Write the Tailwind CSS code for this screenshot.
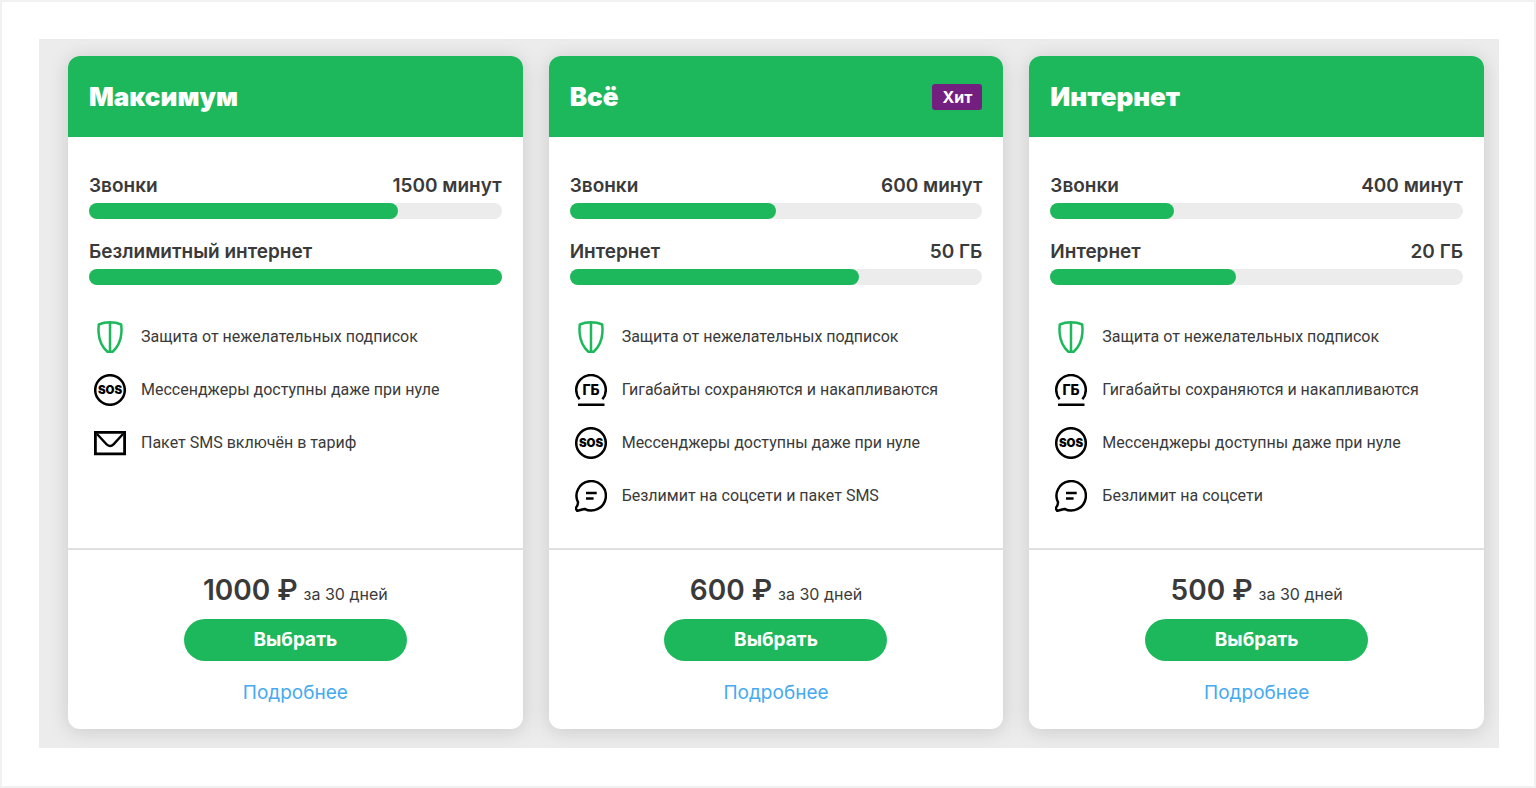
<!DOCTYPE html>
<html lang="ru">
<head>
  <meta charset="UTF-8">
  <meta name="viewport" content="width=device-width, initial-scale=1.0">
  <title>Тарифы</title>
  <script src="https://cdn.jsdelivr.net/npm/@tailwindcss/browser@4"></script>
</head>
<body class="min-h-screen border-2 border-[#f1f1f1] bg-white pt-[37px] pr-[35px] pb-[38px] pl-[37px] font-['Inter','Liberation_Sans',sans-serif] text-[#3a3a3a]">

  <!-- Icons -->
  <svg class="hidden">
    <symbol id="icon-shield" viewBox="0 0 32 32">
      <path d="M16 1.300c4.500 0 8 .8 11.200 2.200.3 2.600.4 5.300.2 8.300-.6 8-3.600 14.300-8.800 18.900h-5.200C8.200 26.100 5.200 19.800 4.600 11.800c-.2-3-.1-5.700.2-8.300C8 2.100 11.500 1.300 16 1.300zM16 2v28" fill="none" stroke="#1eb85c" stroke-width="2.500" stroke-linejoin="round"/>
    </symbol>
    <symbol id="icon-sos" viewBox="0 0 32 32">
      <circle cx="16" cy="16" r="14.800" fill="none" stroke="#000" stroke-width="2.500"/>
      <text x="16" y="20.200" text-anchor="middle" font-family="Inter, sans-serif" font-size="11.500" font-weight="900">SOS</text>
    </symbol>
    <symbol id="icon-gb" viewBox="0 0 32 32">
      <path d="M4.600 25.300a14.800 14.800 0 1 1 22.800 0M3 30.800h26.500" fill="none" stroke="#000" stroke-width="2.500"/>
      <text x="16" y="20.800" text-anchor="middle" font-family="Inter, sans-serif" font-size="14" font-weight="800">ГБ</text>
    </symbol>
    <symbol id="icon-mail" viewBox="0 0 32 32">
      <path d="M1.400 5.400h29.200v21.400H1.400z" fill="none" stroke="#000" stroke-width="2.800"/>
      <path d="M3 7l9.500 10.300c2.200 2.300 4.800 2.300 7 0L29 7" fill="none" stroke="#000" stroke-width="2.400"/>
    </symbol>
    <symbol id="icon-chat" viewBox="0 0 32 32">
      <path d="M3 22.300A14.700 14.700 0 1 1 9.500 28.900C7 29.400 5 30 2.200 30.900L0.500 28.200C2.300 26.300 3.200 24.500 3 22.300z" fill="none" stroke="#000" stroke-width="2.500" stroke-linejoin="round"/>
      <path d="M11 12.900h10.700M11 18.400h7.600" fill="none" stroke="#000" stroke-width="2.500"/>
    </symbol>
  </svg>

  <main class="grid grid-cols-3 gap-[26px] bg-[#ececec] pt-[17px] pr-[15px] pb-[19px] pl-[29px]">

    <!-- Максимум -->
    <section class="flex flex-col overflow-hidden rounded-xl bg-white shadow-[0_2px_20px_rgba(0,0,0,0.15)]">
      <div class="flex h-[81px] items-center justify-between bg-[#1eb85c] px-[21px] text-white">
        <h2 class="text-[26px] font-black">Максимум</h2>
      </div>
      <div class="flex-1 px-[21px] pt-[35px] pb-9">
        <div class="space-y-[19px] text-[19px] leading-7 font-semibold">
          <div>
            <div class="mb-[3px] flex justify-between"><span>Звонки</span><span>1500 минут</span></div>
            <div class="h-4 rounded-full bg-[#ececec]"><div class="h-4 rounded-full bg-[#1eb85c]" style="width: 75%"></div></div>
          </div>
          <div>
            <div class="mb-[3px] flex justify-between"><span>Безлимитный интернет</span></div>
            <div class="h-4 rounded-full bg-[#ececec]"><div class="h-4 rounded-full bg-[#1eb85c]" style="width: 100%"></div></div>
          </div>
        </div>
        <ul class="mt-9 space-y-[21px] pl-[5px] font-['Roboto','Liberation_Sans',sans-serif] text-base">
          <li class="flex h-8 items-center gap-[15px]"><svg class="size-8 shrink-0 overflow-visible"><use href="#icon-shield"/></svg>Защита от нежелательных подписок</li>
          <li class="flex h-8 items-center gap-[15px]"><svg class="size-8 shrink-0 overflow-visible"><use href="#icon-sos"/></svg>Мессенджеры доступны даже при нуле</li>
          <li class="flex h-8 items-center gap-[15px]"><svg class="size-8 shrink-0 overflow-visible"><use href="#icon-mail"/></svg>Пакет SMS включён в тариф</li>
        </ul>
      </div>
      <div class="flex flex-col items-center border-t-2 border-[#e0e0e0] pt-5 pb-[22px]">
        <p class="mb-[9px] flex h-10 items-baseline gap-[6px] leading-10"><span class="text-[28px] font-semibold">1000 ₽</span><span class="text-base leading-6">за 30 дней</span></p>
        <button type="button" class="mb-[18px] h-[42px] w-[223px] rounded-full bg-[#1eb85c] text-[19px] font-bold text-white">Выбрать</button>
        <a href="#" class="text-[19px] leading-7 text-[#45aaf0]">Подробнее</a>
      </div>
    </section>

    <!-- Всё -->
    <section class="flex flex-col overflow-hidden rounded-xl bg-white shadow-[0_2px_20px_rgba(0,0,0,0.15)]">
      <div class="flex h-[81px] items-center justify-between bg-[#1eb85c] px-[21px] text-white">
        <h2 class="text-[26px] font-black">Всё</h2>
        <span class="rounded-[3px] bg-[#731f80] px-[10px] text-base leading-[26px] font-bold">Хит</span>
      </div>
      <div class="flex-1 px-[21px] pt-[35px] pb-9">
        <div class="space-y-[19px] text-[19px] leading-7 font-semibold">
          <div>
            <div class="mb-[3px] flex justify-between"><span>Звонки</span><span>600 минут</span></div>
            <div class="h-4 rounded-full bg-[#ececec]"><div class="h-4 rounded-full bg-[#1eb85c]" style="width: 50%"></div></div>
          </div>
          <div>
            <div class="mb-[3px] flex justify-between"><span>Интернет</span><span>50 ГБ</span></div>
            <div class="h-4 rounded-full bg-[#ececec]"><div class="h-4 rounded-full bg-[#1eb85c]" style="width: 70%"></div></div>
          </div>
        </div>
        <ul class="mt-9 space-y-[21px] pl-[5px] font-['Roboto','Liberation_Sans',sans-serif] text-base">
          <li class="flex h-8 items-center gap-[15px]"><svg class="size-8 shrink-0 overflow-visible"><use href="#icon-shield"/></svg>Защита от нежелательных подписок</li>
          <li class="flex h-8 items-center gap-[15px]"><svg class="size-8 shrink-0 overflow-visible"><use href="#icon-gb"/></svg>Гигабайты сохраняются и накапливаются</li>
          <li class="flex h-8 items-center gap-[15px]"><svg class="size-8 shrink-0 overflow-visible"><use href="#icon-sos"/></svg>Мессенджеры доступны даже при нуле</li>
          <li class="flex h-8 items-center gap-[15px]"><svg class="size-8 shrink-0 overflow-visible"><use href="#icon-chat"/></svg>Безлимит на соцсети и пакет SMS</li>
        </ul>
      </div>
      <div class="flex flex-col items-center border-t-2 border-[#e0e0e0] pt-5 pb-[22px]">
        <p class="mb-[9px] flex h-10 items-baseline gap-[6px] leading-10"><span class="text-[28px] font-semibold">600 ₽</span><span class="text-base leading-6">за 30 дней</span></p>
        <button type="button" class="mb-[18px] h-[42px] w-[223px] rounded-full bg-[#1eb85c] text-[19px] font-bold text-white">Выбрать</button>
        <a href="#" class="text-[19px] leading-7 text-[#45aaf0]">Подробнее</a>
      </div>
    </section>

    <!-- Интернет -->
    <section class="flex flex-col overflow-hidden rounded-xl bg-white shadow-[0_2px_20px_rgba(0,0,0,0.15)]">
      <div class="flex h-[81px] items-center justify-between bg-[#1eb85c] px-[21px] text-white">
        <h2 class="text-[26px] font-black">Интернет</h2>
      </div>
      <div class="flex-1 px-[21px] pt-[35px] pb-9">
        <div class="space-y-[19px] text-[19px] leading-7 font-semibold">
          <div>
            <div class="mb-[3px] flex justify-between"><span>Звонки</span><span>400 минут</span></div>
            <div class="h-4 rounded-full bg-[#ececec]"><div class="h-4 rounded-full bg-[#1eb85c]" style="width: 30%"></div></div>
          </div>
          <div>
            <div class="mb-[3px] flex justify-between"><span>Интернет</span><span>20 ГБ</span></div>
            <div class="h-4 rounded-full bg-[#ececec]"><div class="h-4 rounded-full bg-[#1eb85c]" style="width: 45%"></div></div>
          </div>
        </div>
        <ul class="mt-9 space-y-[21px] pl-[5px] font-['Roboto','Liberation_Sans',sans-serif] text-base">
          <li class="flex h-8 items-center gap-[15px]"><svg class="size-8 shrink-0 overflow-visible"><use href="#icon-shield"/></svg>Защита от нежелательных подписок</li>
          <li class="flex h-8 items-center gap-[15px]"><svg class="size-8 shrink-0 overflow-visible"><use href="#icon-gb"/></svg>Гигабайты сохраняются и накапливаются</li>
          <li class="flex h-8 items-center gap-[15px]"><svg class="size-8 shrink-0 overflow-visible"><use href="#icon-sos"/></svg>Мессенджеры доступны даже при нуле</li>
          <li class="flex h-8 items-center gap-[15px]"><svg class="size-8 shrink-0 overflow-visible"><use href="#icon-chat"/></svg>Безлимит на соцсети</li>
        </ul>
      </div>
      <div class="flex flex-col items-center border-t-2 border-[#e0e0e0] pt-5 pb-[22px]">
        <p class="mb-[9px] flex h-10 items-baseline gap-[6px] leading-10"><span class="text-[28px] font-semibold">500 ₽</span><span class="text-base leading-6">за 30 дней</span></p>
        <button type="button" class="mb-[18px] h-[42px] w-[223px] rounded-full bg-[#1eb85c] text-[19px] font-bold text-white">Выбрать</button>
        <a href="#" class="text-[19px] leading-7 text-[#45aaf0]">Подробнее</a>
      </div>
    </section>

  </main>
</body>
</html>
